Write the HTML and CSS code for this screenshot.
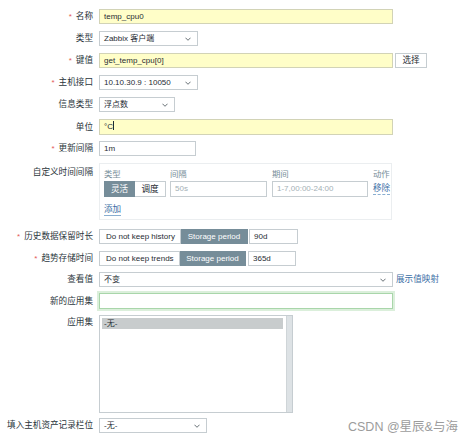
FILE: index.html
```html
<!DOCTYPE html>
<html lang="zh">
<head>
<meta charset="utf-8">
<title>Item</title>
<link rel="stylesheet" href="styles.css">
</head>
<body>
<div class="page">
  <div class="form">
    <div class="row">
      <div class="lbl req">名称</div>
      <div class="field"><div class="input yellow w-full">temp_cpu0</div></div>
    </div>
    <div class="row">
      <div class="lbl">类型</div>
      <div class="field"><div class="select w-99">Zabbix 客户端<svg class="chev" viewBox="0 0 7 4"><polyline points="0.5,0.5 3.5,3.5 6.5,0.5"/></svg></div></div>
    </div>
    <div class="row">
      <div class="lbl req">键值</div>
      <div class="field"><div class="input yellow w-full">get_temp_cpu[0]</div><div class="btn">选择</div></div>
    </div>
    <div class="row">
      <div class="lbl req">主机接口</div>
      <div class="field"><div class="select w-99">10.10.30.9 : 10050<svg class="chev" viewBox="0 0 7 4"><polyline points="0.5,0.5 3.5,3.5 6.5,0.5"/></svg></div></div>
    </div>
    <div class="row">
      <div class="lbl">信息类型</div>
      <div class="field"><div class="select w-76">浮点数<svg class="chev" viewBox="0 0 7 4"><polyline points="0.5,0.5 3.5,3.5 6.5,0.5"/></svg></div></div>
    </div>
    <div class="row">
      <div class="lbl">单位</div>
      <div class="field"><div class="input yellow w-full h16">°C<span class="caret"></span></div></div>
    </div>
    <div class="row tight">
      <div class="lbl req">更新间隔</div>
      <div class="field"><div class="input w-97">1m</div></div>
    </div>
    <div class="row row-top">
      <div class="lbl lbl-box">自定义时间间隔</div>
      <div class="field">
        <div class="box">
          <div class="box-grid">
            <div class="hd">类型</div>
            <div class="hd">间隔</div>
            <div class="hd">期间</div>
            <div class="hd">动作</div>
            <div class="seg">
              <div class="seg-btn on">灵活</div>
              <div class="seg-btn">调度</div>
            </div>
            <div class="input ph h16">50s</div>
            <div class="input ph h16">1-7,00:00-24:00</div>
            <div class="link">移除</div>
          </div>
          <div class="link add">添加</div>
        </div>
      </div>
    </div>
    <div class="row after-box">
      <div class="lbl req">历史数据保留时长</div>
      <div class="field">
        <div class="seg">
          <div class="seg-btn w-82">Do not keep history</div>
          <div class="seg-btn on w-67">Storage period</div>
        </div>
        <div class="input w-49 ml1">90d</div>
      </div>
    </div>
    <div class="row">
      <div class="lbl req">趋势存储时间</div>
      <div class="field">
        <div class="seg">
          <div class="seg-btn w-81">Do not keep trends</div>
          <div class="seg-btn on w-66">Storage period</div>
        </div>
        <div class="input w-48 ml2">365d</div>
      </div>
    </div>
    <div class="row tight">
      <div class="lbl">查看值</div>
      <div class="field"><div class="select w-full">不变<svg class="chev" viewBox="0 0 7 4"><polyline points="0.5,0.5 3.5,3.5 6.5,0.5"/></svg></div><div class="link map">展示值映射</div></div>
    </div>
    <div class="row tight">
      <div class="lbl">新的应用集</div>
      <div class="field"><div class="input focus w-full h16"></div></div>
    </div>
    <div class="row row-top tight">
      <div class="lbl lbl-list">应用集</div>
      <div class="field">
        <div class="listbox">
          <div class="list-items"><div class="opt sel">-无-</div></div>
          <div class="scroll"></div>
        </div>
      </div>
    </div>
    <div class="row tighter">
      <div class="lbl">填入主机资产记录栏位</div>
      <div class="field"><div class="select w-108">-无-<svg class="chev" viewBox="0 0 7 4"><polyline points="0.5,0.5 3.5,3.5 6.5,0.5"/></svg></div></div>
    </div>
  </div>
  <div class="watermark">CSDN @星辰&amp;与海</div>
</div>
</body>
</html>
```
FILE: styles.css
```css
* { box-sizing: border-box; }
html, body { margin: 0; padding: 0; background: #fff; }
body {
  font-family: "Liberation Sans", Arial, "Noto Sans CJK SC", sans-serif;
  font-size: 8px;
  color: #1f2c33;
}
.page { position: relative; width: 474px; height: 437px; overflow: hidden; }
.form { display: flex; flex-direction: column; gap: 7px; padding-top: 9px; }
.row { display: flex; align-items: center; column-gap: 6px; }
.row-top { align-items: flex-start; }
.after-box { margin-top: 2px; }
.tight { margin-top: -1px; }
.tighter { margin-top: -2px; }
.lbl {
  width: 93px; flex: none; text-align: right;
  font-size: 8.6px; line-height: 11px; color: #2b363c; white-space: nowrap;
}
.lbl.req::before { content: "*"; color: #e45959; margin-right: 4px; font-size: 8px; }
.lbl-box { margin-top: 4px; }
.lbl-list { margin-top: 2px; }
.field { display: flex; align-items: center; }
.input, .select {
  height: 15px; line-height: 13px; border: 1px solid #c6cdd1; background: #fff;
  padding: 0 4px; white-space: nowrap; position: relative; color: #1f2c33;
}
.h16 { height: 16px; line-height: 14px; }
.yellow { background: #fffec8; border-color: #d2d3b6; }
.focus { border-color: #a9d6aa; box-shadow: 0 0 0 2px #dbefdb; }
.ph { color: #a4b0b6; }
.select { padding-right: 14px; }
.chev {
  position: absolute; right: 6px; top: 5px; width: 6px; height: 4px;
  fill: none; stroke: #4f5a60; stroke-width: 1;
}
.caret { display: inline-block; width: 1px; height: 9px; background: #1f2c33; vertical-align: -1px; margin-left: 0; }
.w-full { width: 294px; }
.w-99 { width: 99px; }
.w-76 { width: 76px; }
.w-97 { width: 97px; }
.w-108 { width: 108px; }
.w-49 { width: 49px; }
.w-48 { width: 48px; }
.w-82 { width: 82px; }
.w-81 { width: 81px; }
.w-67 { width: 67px; }
.w-66 { width: 66px; }
.ml1 { margin-left: 1px; }
.ml2 { margin-left: 2px; }
.btn {
  margin-left: 2px; width: 32px; height: 15px; line-height: 13px; text-align: center;
  border: 1px solid #c6cdd1; background: #fff; font-size: 8.6px; color: #1f2c33;
}
.box {
  width: 293px; height: 57px; border: 1px solid #ebeef0; background: #fff;
  padding: 5px 0 0 4px;
}
.box-grid {
  display: grid; grid-template-columns: 62px 97px 97px auto; column-gap: 4px;
  row-gap: 2px; align-items: center;
}
.box-grid .input:nth-child(7) { margin-left: 1px; }
.hd { font-size: 8.4px; line-height: 10px; color: #768d99; }
.box-grid .hd:nth-child(3) { margin-left: 1px; }
.box-grid .hd:nth-child(4), .box-grid .link { margin-left: 1px; }
.seg { display: flex; }
.seg-btn {
  height: 15px; line-height: 13px; border: 1px solid #c6cdd1; background: #fff;
  padding: 0 6px; white-space: nowrap; color: #1f2c33; text-align: center;
}
.seg-btn + .seg-btn { border-left: none; }
.seg-btn.on { background: #768d99; border-color: #768d99; color: #fff; }
.box .seg-btn { height: 16px; line-height: 14px; width: 31px; padding: 0; font-size: 8.6px; }
.box .seg-btn + .seg-btn { width: 31px; }
.link { color: #3a6ea5; font-size: 8.6px; line-height: 11px; border-bottom: 1px dashed #8aaed0; width: max-content; }
.add { margin-top: 7px; border-bottom: 1px solid #8aaed0; }
.map { margin-left: 3px; border-bottom: none; }
.listbox {
  width: 194px; height: 98px; border: 1px solid #c6cdd1; background: #fff;
  display: flex; justify-content: space-between;
}
.list-items { padding: 2px 0 0 2px; flex: 1; }
.opt { height: 11px; line-height: 11px; padding-left: 2px; width: 181px; }
.opt.sel { background: #c8cccd; }
.scroll { width: 6px; background: #dde2e5; border-left: 1px solid #cfd5d8; }
.watermark {
  position: absolute; left: 348px; top: 416px;
  font-size: 12.5px; color: #9c9c9c; white-space: nowrap;
}
```
